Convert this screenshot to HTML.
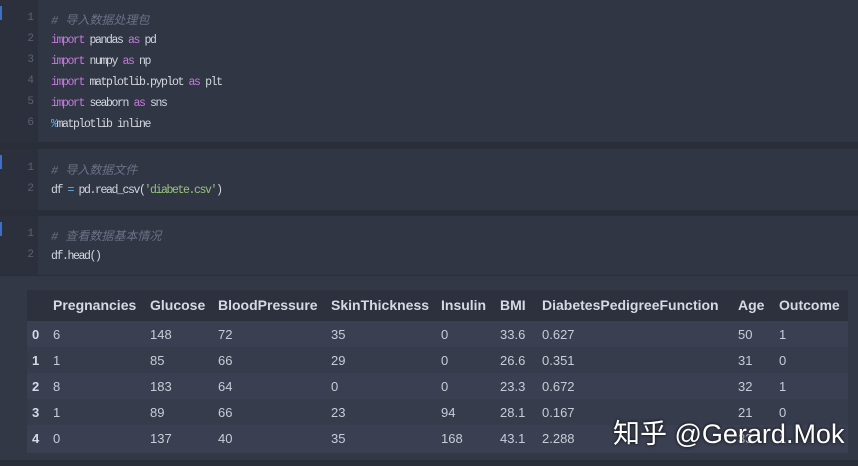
<!DOCTYPE html>
<html><head><meta charset="utf-8"><style>
body{margin:0;width:858px;height:466px;background:#2a2e39;position:relative;overflow:hidden;font-family:"Liberation Mono","Noto Sans CJK SC",monospace;}
.cell{position:absolute;left:0;width:858px;background:#313644;}
.gut{position:absolute;left:0;top:0;bottom:0;width:38px;background:#2c303c;}
.bar{position:absolute;left:0;top:6px;width:2px;height:14px;background:#3d6fc4;}
.ln{position:absolute;left:22px;width:12px;text-align:right;color:#5b6273;font-size:11px;}
.cd{position:absolute;left:51px;color:#d4d7de;font-size:11.5px;letter-spacing:-1.4px;white-space:pre;margin-top:2px}
.k{color:#c678dd}.c{color:#6a7285;font-style:italic;letter-spacing:0;font-size:12px;margin-top:0}.s{color:#98c379}.o{color:#61afef}
.out{position:absolute;left:0;top:276px;width:858px;height:184px;background:#333846;}
.t{position:absolute;font-family:"Liberation Sans","Noto Sans CJK SC",sans-serif;font-size:13px;color:#c8ccd6;}
.h{font-weight:bold;font-size:14px;color:#d6d9e4;}
.i{font-weight:bold;font-size:13px;color:#d6d9e4;}
.row{position:absolute;left:27px;width:821px;height:26px;}
</style></head><body>
<div class="cell" style="top:0;height:142px"><div class="gut"></div><div class="bar"></div>
<div class="ln" style="top:12px">1</div><div class="ln" style="top:33px">2</div><div class="ln" style="top:54px">3</div><div class="ln" style="top:75px">4</div><div class="ln" style="top:96px">5</div><div class="ln" style="top:117px">6</div>
<div class="cd c" style="top:11px"># 导入数据处理包</div>
<div class="cd" style="top:32px"><span class="k">import</span> pandas <span class="k">as</span> pd</div>
<div class="cd" style="top:53px"><span class="k">import</span> numpy <span class="k">as</span> np</div>
<div class="cd" style="top:74px"><span class="k">import</span> matplotlib.pyplot <span class="k">as</span> plt</div>
<div class="cd" style="top:95px"><span class="k">import</span> seaborn <span class="k">as</span> sns</div>
<div class="cd" style="top:116px"><span class="o">%</span>matplotlib inline</div>
</div>
<div class="cell" style="top:149px;height:61px"><div class="gut"></div><div class="bar"></div>
<div class="ln" style="top:13px">1</div><div class="ln" style="top:34px">2</div>
<div class="cd c" style="top:12px"># 导入数据文件</div>
<div class="cd" style="top:33px">df <span class="o">=</span> pd.read_csv(<span class="s">'diabete.csv'</span>)</div>
</div>
<div class="cell" style="top:216px;height:59px"><div class="gut"></div><div class="bar"></div>
<div class="ln" style="top:12px">1</div><div class="ln" style="top:33px">2</div>
<div class="cd c" style="top:11px"># 查看数据基本情况</div>
<div class="cd" style="top:32px">df.head()</div>
</div>
<div class="out"></div>
<div class="row" style="top:290px;height:31px;background:#2c313d"></div>
<div class="row" style="top:321px;background:#3a4051"></div>
<div class="row" style="top:347px;background:#363c4c"></div>
<div class="row" style="top:373px;background:#3a4051"></div>
<div class="row" style="top:399px;background:#363c4c"></div>
<div class="row" style="top:425px;height:28px;background:#3a4051"></div>
<div class="t h" style="top:297px;left:53px">Pregnancies</div>
<div class="t h" style="top:297px;left:150px">Glucose</div>
<div class="t h" style="top:297px;left:218px">BloodPressure</div>
<div class="t h" style="top:297px;left:331px">SkinThickness</div>
<div class="t h" style="top:297px;left:441px">Insulin</div>
<div class="t h" style="top:297px;left:500px">BMI</div>
<div class="t h" style="top:297px;left:542px">DiabetesPedigreeFunction</div>
<div class="t h" style="top:297px;left:738px">Age</div>
<div class="t h" style="top:297px;left:779px">Outcome</div>
<div id="rows"></div>
<script>
var d=[[0,6,148,72,35,0,33.6,0.627,50,1],[1,1,85,66,29,0,26.6,0.351,31,0],[2,8,183,64,0,0,23.3,0.672,32,1],[3,1,89,66,23,94,28.1,0.167,21,0],[4,0,137,40,35,168,43.1,2.288,33,1]];
var xs=[32,53,150,218,331,441,500,542,738,779],h='';
d.forEach(function(r,i){r.forEach(function(v,j){h+='<div class="t'+(j==0?' i':'')+'" style="top:'+(327+i*26)+'px;left:'+xs[j]+'px">'+(j==7?v.toFixed(3):v)+'</div>';});});
document.getElementById('rows').innerHTML=h;
</script>
<div class="t" style="top:412px;left:613px;font-size:27px;color:#fff;text-shadow:0 0 3px #000">知乎 @Gerard.Mok</div>
</body></html>
